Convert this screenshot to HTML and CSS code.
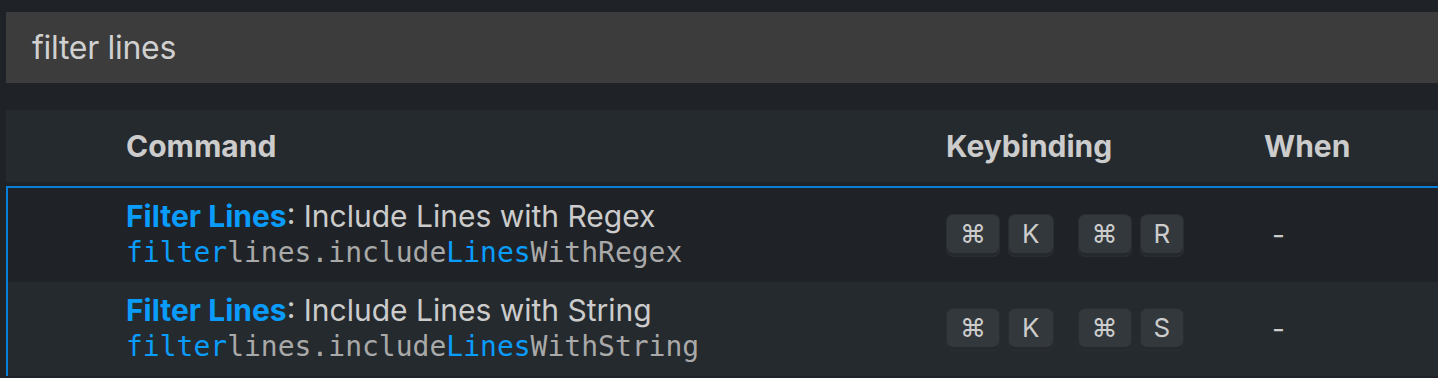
FILE: index.html
```html
<!DOCTYPE html>
<html lang="en">
<head>
  <meta charset="UTF-8">
  <title>Keyboard Shortcuts</title>
  <link rel="stylesheet" href="styles.css">
</head>
<body>
  <div class="search-box">
    <span class="search-text">filter lines</span>
  </div>

  <div class="table-header">
    <div></div>
    <div>Command</div>
    <div>Keybinding</div>
    <div>When</div>
  </div>

  <div class="keybinding-list">
    <div class="kb-row">
      <div></div>
      <div class="command">
        <div class="label"><span class="hl-bold">Filter Lines</span>: Include Lines with Regex</div>
        <div class="command-id"><span class="hl">filter</span>lines.include<span class="hl">Lines</span>WithRegex</div>
      </div>
      <div class="keys">
        <span class="chord"><kbd>⌘</kbd><kbd>K</kbd></span>
        <span class="chord"><kbd>⌘</kbd><kbd>R</kbd></span>
      </div>
      <div class="when">-</div>
    </div>

    <div class="kb-row odd">
      <div></div>
      <div class="command">
        <div class="label"><span class="hl-bold">Filter Lines</span>: Include Lines with String</div>
        <div class="command-id"><span class="hl">filter</span>lines.include<span class="hl">Lines</span>WithString</div>
      </div>
      <div class="keys">
        <span class="chord"><kbd>⌘</kbd><kbd>K</kbd></span>
        <span class="chord"><kbd>⌘</kbd><kbd>S</kbd></span>
      </div>
      <div class="when">-</div>
    </div>
  </div>
</body>
</html>
```
FILE: styles.css
```css
* {
  margin: 0;
  padding: 0;
  box-sizing: border-box;
}
body {
  font-family: Inter, 'Noto Sans', sans-serif;
  background-color: #1f2327;
  color: #cccccc;
  padding: 12px 0 0 6px;
  overflow: hidden;
  height: 378px;
}
.search-box {
  height: 71px;
  background-color: #3c3c3c;
  display: flex;
  align-items: center;
  padding-left: 26px;
}
.search-text {
  font-size: 32px;
  color: #d0d0d0;
  letter-spacing: -0.3px;
}
.table-header {
  margin-top: 27px;
  height: 72px;
  background-color: #252a2e;
  display: grid;
  grid-template-columns: 120px 820px 318px 1fr;
  align-items: center;
  font-size: 30px;
  font-weight: 700;
  color: #cccccc;
}
.keybinding-list {
  margin-top: 4px;
  border-top: 2px solid #0a7fd8;
  border-left: 2px solid #0a7fd8;
}
.kb-row {
  height: 94px;
  display: grid;
  grid-template-columns: 118px 820px 318px 1fr;
  align-items: center;
}
.kb-row.odd {
  background-color: #252a2e;
}
.label {
  font-size: 30px;
  line-height: 36px;
  color: #cccccc;
}
.hl-bold {
  color: #0a9cfb;
  font-weight: 700;
}
.command-id {
  font-family: 'DejaVu Sans Mono', monospace;
  font-size: 28px;
  line-height: 38px;
  color: #a9a9a9;
}
.hl {
  color: #0a9cfb;
}
.keys {
  display: flex;
  align-items: center;
  gap: 24px;
}
.chord {
  display: flex;
  gap: 8px;
}
kbd {
  font-family: Inter, 'DejaVu Sans', sans-serif;
  font-size: 26px;
  color: #cccccc;
  height: 43px;
  min-width: 44px;
  padding: 0 13px 3px;
  display: flex;
  align-items: center;
  justify-content: center;
  background-color: #33383c;
  border: 1px solid #2a2e32;
  border-radius: 7px;
  box-shadow: inset 0 -3px 0 #25292c;
}
.when {
  padding-left: 8px;
  font-size: 28px;
  color: #cccccc;
}
```
